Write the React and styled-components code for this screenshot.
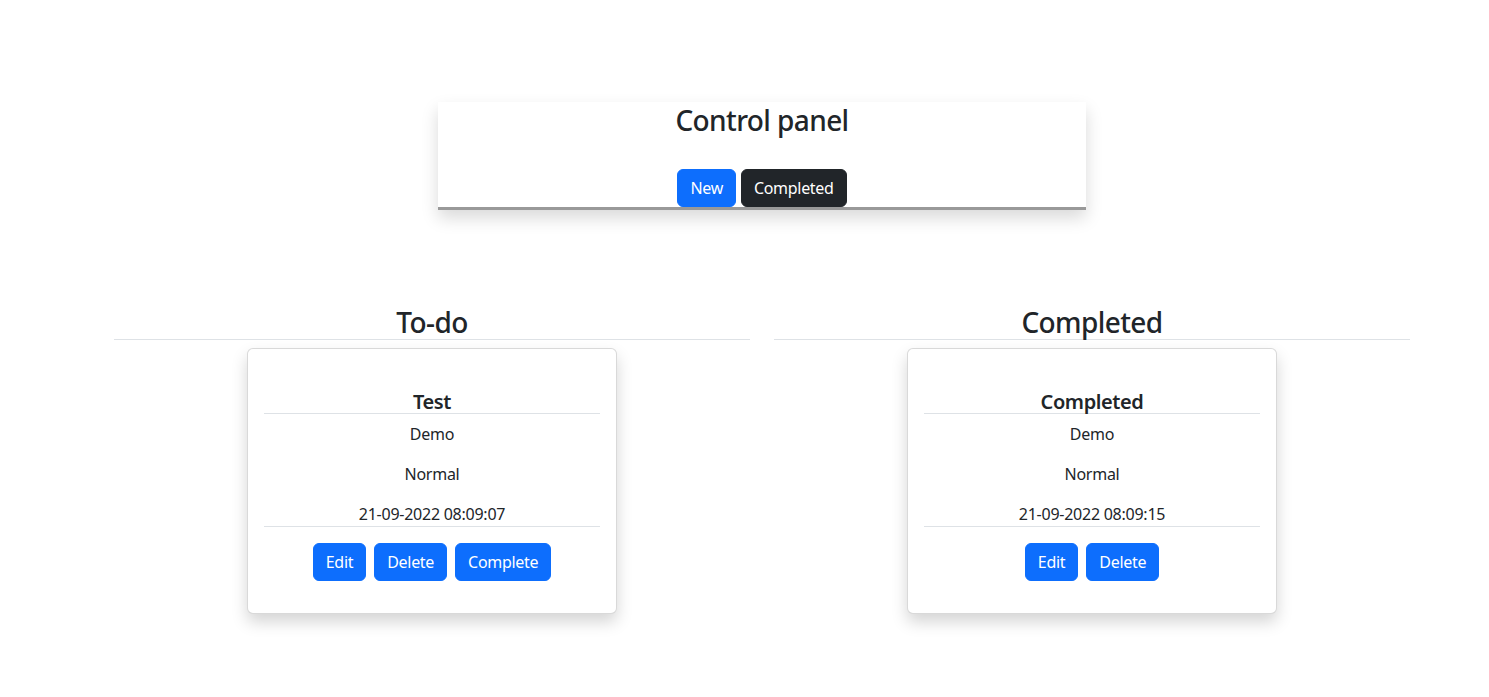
import React from "react";
import styled, { createGlobalStyle } from "styled-components";

const Global = createGlobalStyle`
  * { box-sizing: border-box; }
  html, body { background: #fff; }
  body {
    margin: 0;
    color: #212529;
    font-family: "Segoe UI", "Noto Sans", "Open Sans", sans-serif;
    font-size: 16px;
    line-height: 1.5;
    letter-spacing: -0.25px;
  }
`;

const Page = styled.div`
  width: 1296px;
  min-height: 697px;
  margin-left: 114px;
  padding: 102px 0 80px;
`;

const ControlCard = styled.div`
  width: 648px;
  margin-left: 324px;
  background: #fff;
  box-shadow: 0 8px 16px rgba(0, 0, 0, 0.15);
  border-bottom: 3px solid #999;
  display: flex;
  flex-direction: column;
  align-items: center;
`;

const PanelTitle = styled.h3`
  margin: 0 0 31px;
  padding-top: 2px;
  font-size: 28px;
  font-weight: 500;
  line-height: 1.2;
  height: 36px;
  letter-spacing: -0.6px;
`;

const Toolbar = styled.div`
  display: flex;
  gap: ${(p) => p.$gap}px;
  justify-content: center;
`;

const Button = styled.button`
  font-family: inherit;
  font-size: 16px;
  line-height: 1.5;
  letter-spacing: -0.3px;
  padding: 6px 12px;
  border-radius: 6px;
  border: 1px solid ${(p) => (p.$variant === "dark" ? "#212529" : "#0d6efd")};
  background: ${(p) => (p.$variant === "dark" ? "#212529" : "#0d6efd")};
  color: #fff;
  cursor: pointer;
`;

const Columns = styled.div`
  display: grid;
  grid-template-columns: 1fr 1fr;
  column-gap: 24px;
  margin-top: 96px;
`;

const Column = styled.section`
  display: flex;
  flex-direction: column;
  align-items: center;
`;

const ColumnTitle = styled.h3`
  align-self: stretch;
  margin: 0;
  text-align: center;
  font-size: 28px;
  font-weight: 500;
  line-height: 33px;
  letter-spacing: -0.6px;
  border-bottom: 1px solid #dee2e6;
`;

const Card = styled.div`
  width: 370px;
  margin-top: 8px;
  background: #fff;
  border: 1px solid rgba(0, 0, 0, 0.15);
  border-radius: 6px;
  box-shadow: 0 8px 16px rgba(0, 0, 0, 0.17);
  padding: 40px 16px 16px;
  text-align: center;
`;

const CardTitle = styled.h5`
  margin: 0;
  font-size: 20px;
  font-weight: 600;
  line-height: 24px;
  letter-spacing: -0.4px;
  padding-top: 1px;
  height: 25px;
  border-bottom: 1px solid #dee2e6;
`;

const Info = styled.div`
  padding-top: 8px;
  border-bottom: 1px solid #dee2e6;
`;

const Line = styled.p`
  margin: 0 0 ${(p) => (p.$last ? 0 : 16)}px;
  line-height: 24px;
`;

const CardActions = styled(Toolbar)`
  margin: 16px 0 16px;
`;

const TaskCard = ({ title, date, completable }) => (
  <Card>
    <CardTitle>{title}</CardTitle>
    <Info>
      <Line>Demo</Line>
      <Line>Normal</Line>
      <Line $last>{date}</Line>
    </Info>
    <CardActions $gap={8}>
      <Button>Edit</Button>
      <Button>Delete</Button>
      {completable && <Button>Complete</Button>}
    </CardActions>
  </Card>
);

export default function App() {
  return (
    <>
      <Global />
      <Page>
        <ControlCard>
          <PanelTitle>Control panel</PanelTitle>
          <Toolbar $gap={5}>
            <Button>New</Button>
            <Button $variant="dark">Completed</Button>
          </Toolbar>
        </ControlCard>
        <Columns>
          <Column>
            <ColumnTitle>To-do</ColumnTitle>
            <TaskCard title="Test" date="21-09-2022 08:09:07" completable />
          </Column>
          <Column>
            <ColumnTitle>Completed</ColumnTitle>
            <TaskCard title="Completed" date="21-09-2022 08:09:15" />
          </Column>
        </Columns>
      </Page>
    </>
  );
}
